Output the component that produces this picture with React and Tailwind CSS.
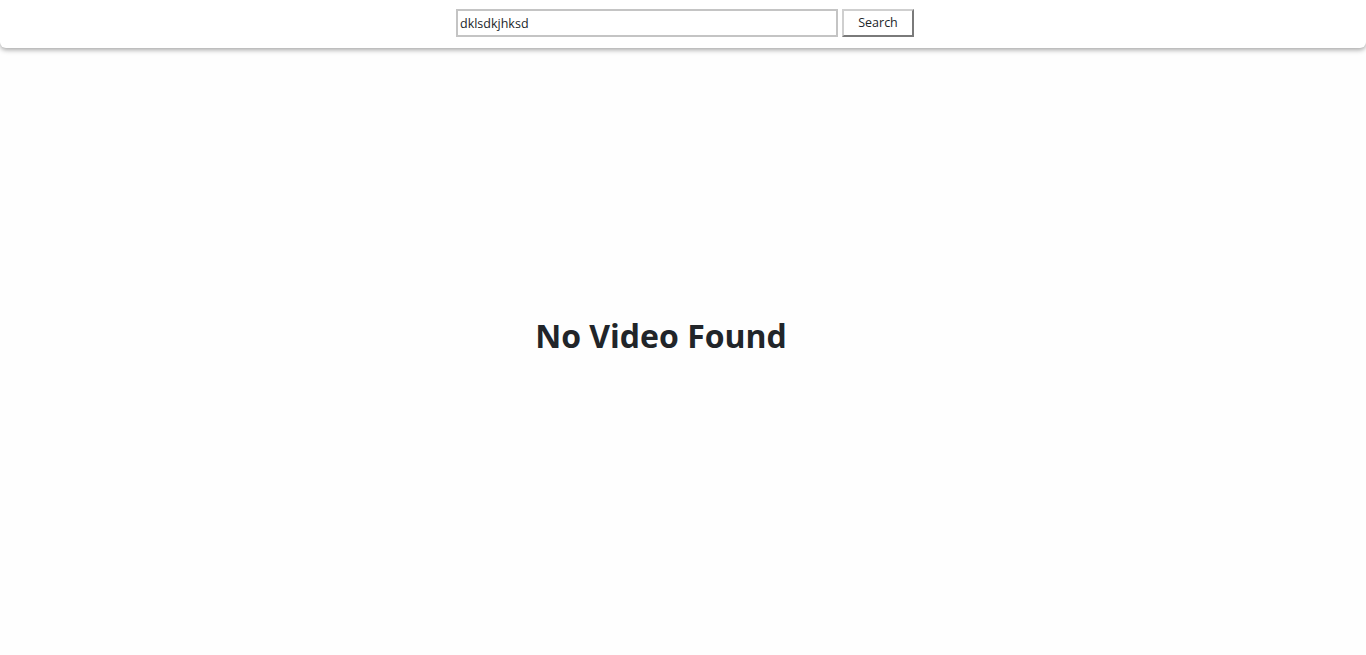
export default function App() {
  return (
    <div className="min-h-[655px] bg-[#fefefe] text-[#212529] flex flex-col" style={{ fontFamily: '"Open Sans", "Noto Sans", sans-serif' }}>
      <header className="h-[48px] bg-white rounded-b-[6px] shadow-[0_2px_5px_rgba(0,0,0,0.35)] flex items-start justify-center pt-[9px] pl-[4px]">
        <input
          defaultValue="dklsdkjhksd"
          className="w-[382px] h-[28px] border-2 border-[#c4c4c4] bg-white px-[2px] text-[12.5px] text-[#212529] outline-none"
          style={{ fontFamily: '"Open Sans", sans-serif' }}
        />
        <button className="ml-[4px] w-[72px] h-[28px] bg-white border-2 border-t-[#cfcfcf] border-l-[#cfcfcf] border-r-[#7a7a7a] border-b-[#7a7a7a] text-[12.5px] text-[#212529]">
          Search
        </button>
      </header>
      <main className="flex justify-center pt-[268px] pr-[44px]">
        <h1 className="text-[32px] font-bold leading-[40px] text-[#212529]" style={{ fontFamily: '"Open Sans", sans-serif' }}>No Video Found</h1>
      </main>
    </div>
  );
}
